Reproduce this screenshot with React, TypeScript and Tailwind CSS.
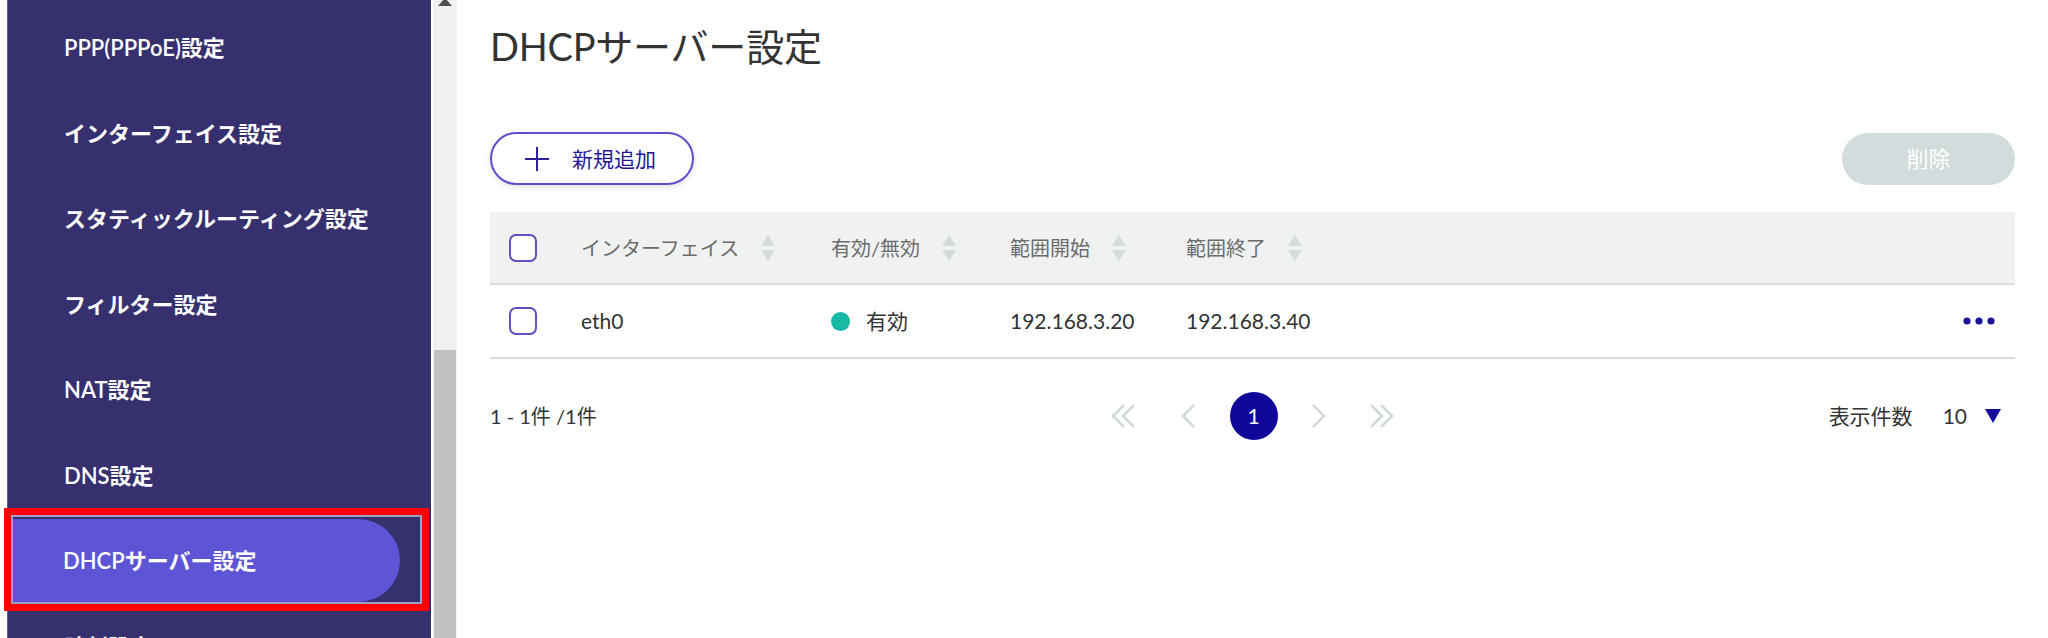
import React from "react";

const menu = [
  "PPP(PPPoE)設定",
  "インターフェイス設定",
  "スタティックルーティング設定",
  "フィルター設定",
  "NAT設定",
  "DNS設定",
];

function SortIcon() {
  return (
    <svg width="14" height="26" viewBox="0 0 14 26" className="ml-[22px] shrink-0">
      <polygon points="7,0 14,11 0,11" fill="#d3dcdc" />
      <polygon points="0,15 14,15 7,26" fill="#d3dcdc" />
    </svg>
  );
}

function Checkbox() {
  return <div className="w-[28px] h-[28px] rounded-[7px] border-2 border-[#5d52c4] bg-white" />;
}

function Chevron({ dir, double }: { dir: "l" | "r"; double?: boolean }) {
  const w = double ? 24 : 14;
  const pts = (x: number) =>
    dir === "l" ? `${x + 12},1 ${x + 1},12 ${x + 12},23` : `${x + 1},1 ${x + 12},12 ${x + 1},23`;
  return (
    <svg width={w} height="24" viewBox={`0 0 ${w} 24`}>
      <polyline points={pts(0)} fill="none" stroke="#cfdad8" strokeWidth="2.5" />
      {double && <polyline points={pts(10)} fill="none" stroke="#cfdad8" strokeWidth="2.5" />}
    </svg>
  );
}

export default function App() {
  return (
    <div className="flex h-[638px] w-[2048px] overflow-hidden bg-white font-['Lato','Noto_Sans_CJK_JP',sans-serif]">
      <div className="w-[7px] shrink-0 bg-white" />
      {/* Sidebar */}
      <nav className="w-[424px] shrink-0 bg-[#36306e] pt-[5px] border-l border-[#5f5a90]">
        {menu.map((m) => (
          <div key={m} className="h-[85.5px] flex items-center pl-[56px] text-white text-[22px] font-semibold">
            {m}
          </div>
        ))}
        <div className="relative h-[85.5px] flex items-center">
          <div className="ml-[3px] w-[389px] h-[83px] rounded-r-full bg-[#5d55d6] flex items-center pl-[52px] text-white text-[22px] font-semibold">
            DHCPサーバー設定
          </div>
          <div className="absolute top-[-10px] bottom-[-7px] left-[-4px] right-[2px] border-[7px] border-[#ff0000]">
            <div className="absolute inset-0 border-2 border-[#a29fc6]" />
          </div>
        </div>
        <div className="h-[85.5px] flex items-center pl-[56px] text-white text-[22px] font-semibold">
          時刻設定
        </div>
      </nav>
      {/* Scrollbar */}
      <div className="relative w-[26px] shrink-0 bg-[#f1f1f1] flex flex-col border-l-2 border-white">
        <svg width="14" height="6" viewBox="0 0 14 6" className="absolute top-0 left-[5px]">
          <polygon points="7,-2 14,6 0,6" fill="#505050" />
        </svg>
        <div className="h-[350px] shrink-0" />
        <div className="flex-1 mx-[1px] bg-[#c1c1c1]" />
      </div>
      {/* Main */}
      <main className="flex-1 pl-[33px] pr-[33px] pt-[22px]">
        <h1 className="text-[38px] leading-[48px] text-[#333333] font-normal tracking-[-0.2px]">DHCPサーバー設定</h1>
        <div className="mt-[62px] flex items-center justify-between">
          <button className="h-[53px] w-[204px] rounded-full border-2 border-[#5a4fcf] bg-white shadow-[0_2px_6px_rgba(0,0,0,0.12)] flex items-center pl-[32px] text-[#1f1794] text-[21px]">
            <svg width="26" height="26" viewBox="0 0 26 26">
              <line x1="13" y1="1" x2="13" y2="25" stroke="#2d2596" strokeWidth="2" />
              <line x1="1" y1="13" x2="25" y2="13" stroke="#2d2596" strokeWidth="2" />
            </svg>
            <span className="ml-[22px]">新規追加</span>
          </button>
          <button className="h-[52px] w-[173px] rounded-full bg-[#d3dcdc] text-white text-[22px] flex items-center justify-center">
            削除
          </button>
        </div>
        {/* Table */}
        <div className="mt-[27px]">
          <div className="h-[73px] bg-[#f0f2f2] border-b-2 border-[#d5dede] flex items-center text-[20px] text-[#6b6b6b]">
            <div className="w-[91px] pl-[19px] shrink-0"><Checkbox /></div>
            <div className="w-[250px] shrink-0 flex items-center">インターフェイス<SortIcon /></div>
            <div className="w-[179px] shrink-0 flex items-center">有効/無効<SortIcon /></div>
            <div className="w-[176px] shrink-0 flex items-center">範囲開始<SortIcon /></div>
            <div className="flex-1 flex items-center">範囲終了<SortIcon /></div>
          </div>
          <div className="h-[74px] border-b-2 border-[#d5dede] flex items-center text-[21px] text-[#333333]">
            <div className="w-[91px] pl-[19px] shrink-0"><Checkbox /></div>
            <div className="w-[250px] shrink-0">eth0</div>
            <div className="w-[179px] shrink-0 flex items-center">
              <span className="w-[19px] h-[19px] rounded-full bg-[#18b9a4] inline-block" />
              <span className="ml-[16px]">有効</span>
            </div>
            <div className="w-[176px] shrink-0">192.168.3.20</div>
            <div className="flex-1">192.168.3.40</div>
            <div className="pr-[20px]">
              <svg width="32" height="8" viewBox="0 0 32 8">
                <circle cx="4" cy="4" r="3.6" fill="#1b1399" />
                <circle cx="16" cy="4" r="3.6" fill="#1b1399" />
                <circle cx="28" cy="4" r="3.6" fill="#1b1399" />
              </svg>
            </div>
          </div>
        </div>
        {/* Footer */}
        <div className="mt-[33px] h-[48px] flex items-center text-[20px] text-[#333333]">
          <div className="flex-1">1 - 1件 /1件</div>
          <div className="flex items-center">
            <Chevron dir="l" double />
            <div className="ml-[46px]"><Chevron dir="l" /></div>
            <div className="ml-[34px] w-[48px] h-[48px] rounded-full bg-[#10069a] text-white flex items-center justify-center text-[21px]">1</div>
            <div className="ml-[34px]"><Chevron dir="r" /></div>
            <div className="ml-[44px]"><Chevron dir="r" double /></div>
          </div>
          <div className="flex-1 flex items-center justify-end text-[21px]">
            <span>表示件数</span>
            <span className="ml-[30px]">10</span>
            <svg width="16" height="14" viewBox="0 0 16 14" className="ml-[18px] mr-[14px]">
              <polygon points="0,0 16,0 8,14" fill="#14099b" />
            </svg>
          </div>
        </div>
      </main>
    </div>
  );
}
